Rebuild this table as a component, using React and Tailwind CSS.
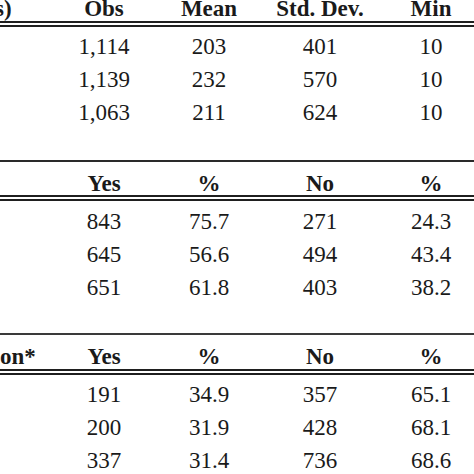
import React from 'react';

const cols = 'grid grid-cols-[52px_104px_106px_116px_106px] text-center';

function DoubleRule({ className = '' }) {
  return (
    <div className={className}>
      <div className="h-[1.5px] bg-[#1f1f1f]" />
      <div className="h-[2px]" />
      <div className="h-[2px] bg-[#1f1f1f]" />
    </div>
  );
}

function Header({ label, cells, className = '' }) {
  return (
    <div className={`${cols} h-[23px] leading-[23px] font-bold ${className}`}>
      <div className="text-left whitespace-nowrap">{label}</div>
      {cells.map((c, i) => (
        <div key={i} className="whitespace-nowrap">{c}</div>
      ))}
    </div>
  );
}

function Rows({ rows, className = '' }) {
  return (
    <div className={className}>
      {rows.map((r, i) => (
        <div key={i} className={`${cols} h-[33px] leading-[33px]`}>
          <div />
          {r.map((c, j) => (
            <div key={j}>{c}</div>
          ))}
        </div>
      ))}
    </div>
  );
}

function App() {
  return (
    <div
      className="w-[474px] h-[474px] overflow-hidden bg-white text-[#1a1a1a] text-[23px]"
      style={{ fontFamily: '"Liberation Serif", "Times New Roman", serif' }}
    >
      {/* section 1 */}
      <Header
        className="-mt-[3px]"
        label={<span className="-ml-[5px] inline-block">s)</span>}
        cells={['Obs', 'Mean', 'Std. Dev.', 'Min']}
      />
      <DoubleRule className="mt-[1px]" />
      <Rows
        className="mt-[3.75px]"
        rows={[
          ['1,114', '203', '401', '10'],
          ['1,139', '232', '570', '10'],
          ['1,063', '211', '624', '10'],
        ]}
      />
      <div className="mt-[30.25px] h-[2px] bg-[#2a2a2a]" />

      {/* section 2 */}
      <Header className="mt-[10.75px]" label="" cells={['Yes', '%', 'No', '%']} />
      <DoubleRule />
      <Rows
        className="mt-[4.5px]"
        rows={[
          ['843', '75.7', '271', '24.3'],
          ['645', '56.6', '494', '43.4'],
          ['651', '61.8', '403', '38.2'],
        ]}
      />
      <div className="mt-[28.25px] h-[2px] bg-[#3a3a3a]" />

      {/* section 3 */}
      <Header className="mt-[10.75px]" label="on*" cells={['Yes', '%', 'No', '%']} />
      <DoubleRule className="mt-[1px]" />
      <Rows
        className="mt-[3.5px]"
        rows={[
          ['191', '34.9', '357', '65.1'],
          ['200', '31.9', '428', '68.1'],
          ['337', '31.4', '736', '68.6'],
        ]}
      />
    </div>
  );
}

export default App;
